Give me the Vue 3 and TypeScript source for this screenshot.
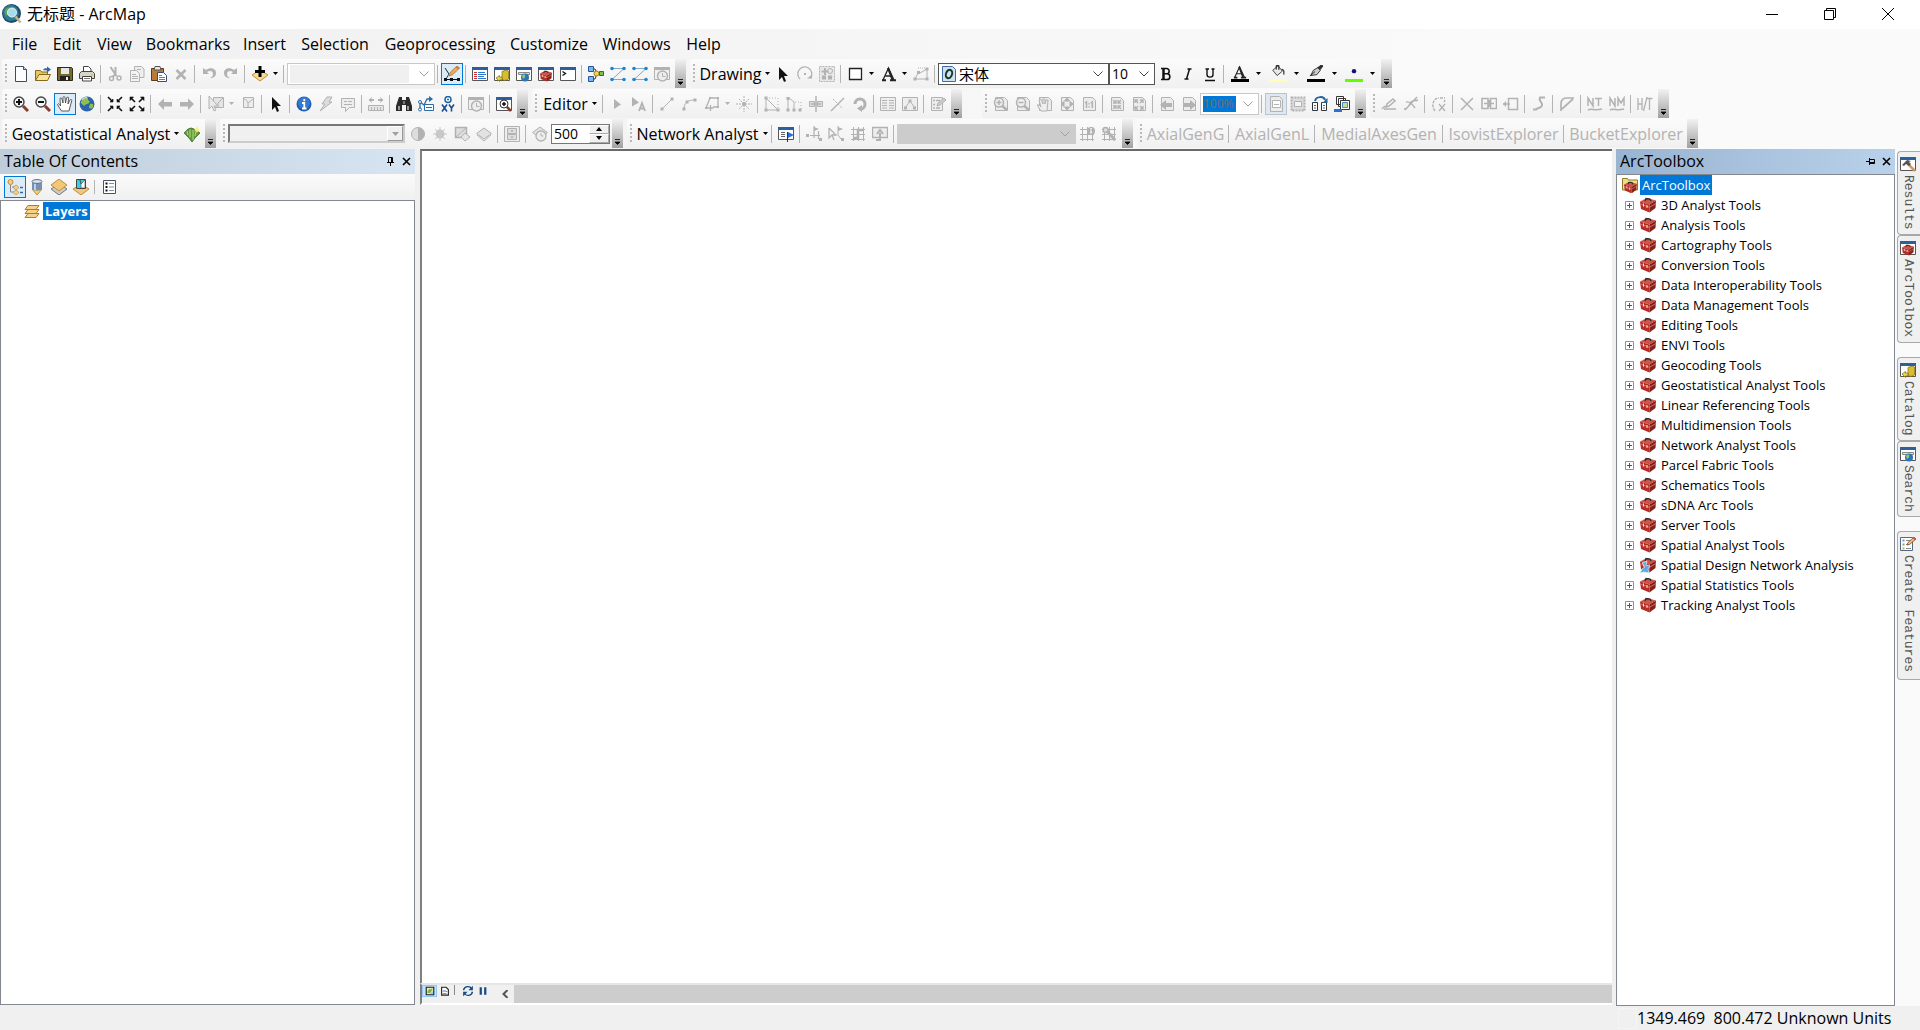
<script setup lang="ts">
import { ref } from 'vue'

interface Item {
  kind: 'btn' | 'split' | 'colour' | 'sep' | 'menu' | 'text' | 'combo' | 'spin'
  icon?: string
  label?: string
  off?: boolean
  on?: boolean
  width?: number
  look?: string
  swatch?: string
}
interface Toolbar {
  name: string
  items: Item[]
  apart?: boolean
}

const b = (icon: string, label: string): Item => ({ kind: 'btn', icon, label })
const d = (icon: string, label: string): Item => ({ kind: 'btn', icon, label, off: true })
const on = (icon: string, label: string): Item => ({ kind: 'btn', icon, label, on: true })
const split = (icon: string, label: string, off = false): Item => ({ kind: 'split', icon, label, off })
const colour = (icon: string, label: string, swatch: string): Item => ({ kind: 'colour', icon, label, swatch })
const menu = (label: string, width: number): Item => ({ kind: 'menu', label, width })
const text = (label: string, width: number): Item => ({ kind: 'text', label, width, off: true })
const sep: Item = { kind: 'sep' }

const win = '<path d="M.5 2.500h15v12H.5z" fill="#fff" stroke="#555"/><path d="M0 1h16v3H0z" fill="#2b5f9e"/>'
const page = '<path d="M2.500 1.500h9l3 3v10h-12z" fill="#ececec" stroke="currentColor"/>'
const box =
  '<path d="M0 4.500L7 1l9 2.500-6.500 4z" fill="#cf5247"/><path d="M0 4.500l9.500 3V15.500L1 12z" fill="#b62d25"/><path d="M9.500 7.500L16 3.500l-.5 7.500-6 4.500z" fill="#86201a"/><path d="M0 7l9.500 3.300L16 6.500" fill="none" stroke="#e08378" stroke-width=".8"/><path d="M5 4l1-2.500 4 .5 1 2" fill="none" stroke="#2b2b2b" stroke-width="1.300"/><path d="M3.500 6.500v3M7 8v3" stroke="#f4e5e2"/>'
const globe =
  '<circle cx="8" cy="8" r="7.500" fill="#2d62ad"/><path d="M3 4c3-4 7-3 6 0 3 1 1 4-1 4s-2 3-4 1S1 7 3 4zM11 8c3-1 4 1 3 3s-4 2-4 0z" fill="#8cc152"/><path d="M3 4c1-2 4-3 5-2" stroke="#fff" stroke-width="1.500" opacity=".6" fill="none"/>'
const lens = (s: string, c: string) =>
  `<path d="M10 10l5 5" stroke="#8a3b2c" stroke-width="3"/><circle cx="6" cy="6" r="5" fill="#f4f4f4" stroke="${c}" stroke-width="1.400"/><path d="${s}" stroke="#111" stroke-width="2"/>`
const zigzag =
  '<path d="M2 2.500h12L2 13.500h12" fill="none" stroke="#7ea9cf"/><g fill="#1c87c9"><circle cx="2" cy="2.500" r="1.800"/><circle cx="14" cy="2.500" r="1.800"/><circle cx="2" cy="13.500" r="1.800"/><circle cx="14" cy="13.500" r="1.800"/></g>'
const clockWin =
  '<path d="M.5 1.500h15v12H.5z" fill="#f1f1f1" stroke="currentColor"/><path d="M0 1h16v3H0z" fill="currentColor"/><circle cx="8.500" cy="10" r="5" fill="#eee" stroke="currentColor" stroke-width="1.500"/><path d="M8.500 7v3.500h3" fill="none" stroke="currentColor"/>'
const grid = '<path d="M1 3.500h14M1 8.500h14M1 13.500h14M3.500 1v14M8.500 1v14M13.500 1v14" fill="none" stroke="currentColor"/>'

const icons: Record<string, string> = {
  new: '<path d="M2.500.5h8l3 3v12h-11z" fill="#fbfdff" stroke="#3f4a5c"/><path d="M10.500.5v3h3" fill="#cfd8e4" stroke="#3f4a5c"/>',
  open: '<path d="M.5 14.500v-10h5l1 1.500h6v3" fill="#e7c667" stroke="#846a1e"/><path d="M.5 14.500L4 8.500h11.500l-3 6z" fill="#fbe49a" stroke="#846a1e"/><path d="M8 4c1-2 3-2 4-1.500V.5l4 3-4 3V4.500c-2-.5-3 0-4-.5z" fill="#2f66a5"/>',
  save: '<path d="M.5 1.500h14l1 1v12H.5z" fill="#766b2c" stroke="#2d2a17"/><path d="M4 2h8v6H4z" fill="#e6e6e6"/><path d="M3 10h10v4.500H3z" fill="#222"/><path d="M9 11h2v3H9z" fill="#eee"/>',
  print: '<path d="M4.500 6V.5h5l2.500 2.500v3" fill="#fff" stroke="#444"/><path d="M.5 7.500l2-2h11l2 2v5H.5z" fill="#d7d4cc" stroke="#444"/><path d="M3.500 10.500h9v4.500h-9z" fill="#fff" stroke="#444"/><path d="M5 12.500h6" stroke="#777"/><path d="M12 8h2v1.500h-2z" fill="#d9c44a"/>',
  cut: '<path d="M3.500 1l6 9M8.500 1v7l-3 3" fill="none" stroke="currentColor" stroke-width="2"/><circle cx="4.500" cy="12.500" r="2" fill="none" stroke="currentColor" stroke-width="1.500"/><circle cx="12" cy="12" r="2" fill="none" stroke="currentColor" stroke-width="1.500"/>',
  copy: '<path d="M5.500.5h7l2.500 2.500v8.500H5.500z" fill="#eee" stroke="currentColor"/><path d="M1.500 4.500h6l3 3v8h-9z" fill="#f3f3f3" stroke="currentColor"/><path d="M3 8.500h4M3 10.500h6M3 12.500h6M8 3.500h4" stroke="currentColor"/>',
  paste: '<path d="M.5 2.500h12v12H.5z" fill="#b97b3c" stroke="#5a3b1a"/><path d="M4 .5h5l1 3.500H3z" fill="#e8e8e8" stroke="#555"/><path d="M6.500 6.500h6l3 3v6h-9z" fill="#fff" stroke="#33507c"/><path d="M8 9.500h3M8 11.500h6M8 13.500h6" stroke="#5a80b8"/>',
  del: '<path d="M3.500 4l9 9M12.500 4l-9 9" stroke="currentColor" stroke-width="2.500"/>',
  undo: '<path d="M2 2v6h6L6 6c3-2 6-1 6 2 0 2-1 3-3 4 4 0 6-2 6-5 0-5-6-6-10-3z" fill="currentColor"/>',
  redo: '<path d="M14 2v6H8l2-2C7 4 4 5 4 8c0 2 1 3 3 4-4 0-6-2-6-5 0-5 6-6 10-3z" fill="currentColor"/>',
  add: '<path d="M0 9l8-5 8 5-8 6z" fill="#f8d990" stroke="#c78a33"/><path d="M8 0v11M3 5.500h10" stroke="#000" stroke-width="3"/>',
  sketch: '<path d="M2 13l3-5M9 13.500h6" fill="none" stroke="#444"/><path d="M0 12h3v3H0zM6 12h3v3H6zM13 12h3v3h-3z" fill="#111"/><path d="M2 13.500h12" stroke="#111"/><path d="M1 2l4 6" stroke="#222"/><path d="M5 10l1.500-4L13 0l2.500 2L9 8.500z" fill="#e9ad55" stroke="#9c6a38" stroke-width=".7"/><path d="M13 0l2.500 2-1.500 1.300L11.700 1.200z" fill="#d46e62"/>',
  winToc: win + '<path d="M2 6.500h3M2 8.500h3M2 10.500h3M2 12.500h3" stroke="#d12f2f"/><path d="M6 6.500h7M6 8.500h8M6 10.500h6M6 12.500h8" stroke="#2f7ad1"/>',
  winCat: win + '<path d="M8 5.500l4-1.500 2.500 1v8L11 14.500l-3-1z" fill="#d9bd2b" stroke="#7d6a10" stroke-width=".7"/><path d="M2 12l3.500-2.500V11H8v3H5.500v1.500z" fill="#e8d34d" stroke="#7d6a10" stroke-width=".7"/>',
  winSearch: win + '<path d="M2.500 6.500h11v2h-11z" fill="#dfe6ef" stroke="#888"/><circle cx="9" cy="11.500" r="4" fill="#2f74b8"/><path d="M6 10c2-3 4-1 3 1s-2 3-3-1z" fill="#93cc5c"/>',
  winBox: win + `<g transform="translate(2 4) scale(.74)">${box}</g>`,
  winPy: win + '<path d="M2.500 5.500l3 2-3 2" fill="none" stroke="#111" stroke-width="1.300"/>',
  model: '<path d="M4 3h3l2 4h4M4 13h3l2-5" fill="none" stroke="#333"/><path d="M.5.5h5v5h-5zM.5 10.500h5v5h-5z" fill="#7fb6ec" stroke="#1f57a0"/><circle cx="8.500" cy="7.500" r="2.500" fill="#f5d34d" stroke="#a07e10"/><path d="M11.500 5.500h4v4h-4z" fill="#79c25a" stroke="#2d6f1a"/>',
  zigzag,
  clockWin,
  zoomIn: lens('M6 3v6M3 6h6', '#444'),
  zoomOut: lens('M3 6h6', '#444'),
  hand: '<path d="M4.500 15c-1-2-3-4-4-6.500 1-1.500 2-.5 3 1.500L3 3c0-1.500 1.500-1.500 2 0l1 4V1.500c.3-1.300 1.700-1.300 2 0L8.500 7l1-5c.5-1.300 2-1 2 0L11 8l2-4c.7-1 2-.5 1.800.5L13 11l-1 4z" fill="#fff" stroke="#4a4a4a" stroke-width=".9"/>',
  globe,
  fixedIn: '<g fill="#111" stroke="#111" stroke-width="1.600"><path d="M1 1l4 4M15 1l-4 4M1 15l4-4M15 15l-4-4"/><path d="M6 3v3H3zM10 3v3h3zM6 13v-3H3zM10 13v-3h3z" stroke-width=".6"/></g>',
  fixedOut: '<g fill="#111" stroke="#111" stroke-width="1.600"><path d="M2 2l4 4M14 2l-4 4M2 14l4-4M14 14l-4-4"/><path d="M1 4.500V1h3.500zM15 4.500V1h-3.500zM1 11.500V15h3.500zM15 11.500V15h-3.500z" stroke-width=".6"/></g>',
  back: '<path d="M1 8l6-5.500V6h8v4.500H7v3.500z" fill="currentColor"/>',
  fwd: '<path d="M15 8L9 2.500V6H1v4.500h8v3.500z" fill="currentColor"/>',
  select: '<path d="M5.500 1.500h10v10h-10z" fill="#e4e4e4" stroke="currentColor"/><path d="M15 2l-5 5v4" fill="none" stroke="currentColor"/><path d="M1 0v13l3-3 2 5 2-1-2-4h4z" fill="#e9e9e9" stroke="currentColor"/>',
  clear: '<path d="M3.500 1.500h10v10h-10z" fill="#ededed" stroke="currentColor"/><path d="M4 3c4 1 3 3 4 4l5-4M8 7v4" fill="none" stroke="currentColor"/>',
  arrow: '<path d="M4 1v13l3-3 2 5 2-1-2-5h4z" fill="#111"/>',
  info: '<circle cx="8" cy="8" r="7.500" fill="#1f5fb4"/><circle cx="8" cy="7" r="6" fill="#3779cc"/><path d="M8.300 3v2.200M6 7h2.300v5.500M6 12.500h4.500" stroke="#fff" stroke-width="1.800" fill="none"/>',
  bolt: '<path d="M9 1h5l-3 5h3L2 15l5-7H4z" fill="#ddd" stroke="currentColor"/>',
  note: '<path d="M1.500 2.500h13v9h-5l-4 4v-4h-4z" fill="#eee" stroke="currentColor"/><path d="M4 5.500h3M8 5.500h4M4 8.500h8" stroke="currentColor"/>',
  measure: '<path d="M.5 9.500h15v5H.5z" fill="#e6e6e6" stroke="currentColor"/><path d="M3.500 11v3M6.500 11v3M9.500 11v3M12.500 11v3" stroke="currentColor"/><path d="M1 4h5M10 4h5" stroke="currentColor" stroke-width="2"/><path d="M4 1.500L1 4l3 2.500M12 1.500L15 4l-3 2.500" fill="none" stroke="currentColor"/>',
  binoc: '<path d="M3 1h3v3h4V1h3l3 9v5h-6V9H6v6H0v-5z" fill="#2b2b2b"/><path d="M2 10h2v4H2zM11 10h2v4h-2z" fill="#999"/><path d="M7 5h2v3H7z" fill="#777"/>',
  route: '<path d="M2 13V6l4 3 3-6h3" fill="none" stroke="#2c6ca6" stroke-width="1.300"/><path d="M11 0l4 3-4 3z" fill="#2c6ca6"/><g fill="#fff" stroke="#2c6ca6"><circle cx="2" cy="13.500" r="1.500"/><circle cx="2" cy="6" r="1.500"/><path d="M6.500 8.500h9v6h-9z"/></g><path d="M8 11.500h6" stroke="#2c6ca6"/>',
  goxy: '<circle cx="8" cy="3.500" r="3" fill="#fff" stroke="#1d62a5" stroke-width="1.500"/><circle cx="8" cy="3.500" r="1" fill="#1d62a5"/><path d="M2 8.500l5 7M7 8.500l-5 7M9 8.500l2.500 3.500v3.500M14 8.500L11.500 12" fill="none" stroke="#1d4f93" stroke-width="1.600"/>',
  viewer: win + '<path d="M10 10l5 5" stroke="#8a3b2c" stroke-width="2.500"/><circle cx="8" cy="8" r="4" fill="#fff" stroke="#333"/><path d="M8 6v4M6 8h4" stroke="#111" stroke-width="1.500"/>',
  play: '<path d="M5 3l7 5.500-7 4.500z" fill="currentColor"/>',
  playA: '<path d="M1 1l7 5.500-7 4z" fill="currentColor"/><path d="M8 15l3-8 3 8M9 12.500h4" fill="none" stroke="currentColor" stroke-width="1.800"/>',
  line: '<path d="M3 13L13 3" stroke="currentColor"/><path d="M1.500 11.500h3v3h-3zM11.500 1.500h3v3h-3z" fill="currentColor"/>',
  arc: '<path d="M3 13c0-6 4-9 10-9" fill="none" stroke="currentColor"/><path d="M1.500 11.500h3v3h-3zM4.500 4.500h3v3h-3zM12.500 2.500h3v3h-3z" fill="currentColor"/>',
  trace: '<path d="M2 12L6 2h8v9H9M2 12h2" fill="none" stroke="currentColor" stroke-width="1.300"/><path d="M6.500 9v6M3.500 12h6" stroke="currentColor" stroke-width="1.300"/><path d="M5 1h2v2H5zM13 1h2v2h-2zM13 10h2v2h-2zM1 11h2v2H1z" fill="currentColor"/>',
  burst: '<path d="M8 0v16M0 8h16M3 3l10 10M13 3L3 13" stroke="currentColor" stroke-dasharray="2 1"/><circle cx="8" cy="8" r="2" fill="currentColor"/>',
  reshape: '<path d="M2 2v12h12z" fill="none" stroke="currentColor"/><path d="M2 2h12v12" fill="none" stroke="currentColor" stroke-dasharray="1 2"/><path d="M.5.5h3v3h-3zM.5 12.500h3v3h-3zM12.500 12.500h3v3h-3z" fill="currentColor"/>',
  sides: '<path d="M2 2v12M3 2l5 4v8" fill="none" stroke="currentColor"/><path d="M9 6h6v8" fill="none" stroke="currentColor" stroke-dasharray="1 2"/><path d="M.5 1h3v3h-3zM.5 12.500h3v3h-3zM6.500 12.500h3v3h-3zM12.500 12.500h3v3h-3z" fill="currentColor"/>',
  slice: '<path d="M1.500 5.500h5v5h-5zM9.500 5.500h5v5h-5z" fill="#ddd" stroke="currentColor"/><path d="M8 0v16M3 8h10" stroke="currentColor" stroke-width="1.500"/>',
  cross: '<path d="M1 15L14 2" stroke="currentColor" stroke-width="1.500"/><path d="M3 3l9 9" stroke="currentColor" stroke-dasharray="2 1.500"/>',
  rotate: '<path d="M3 8a5 5 0 1 1 6 5" fill="none" stroke="currentColor" stroke-width="3"/><path d="M10 9v7l-5-3.500z" fill="currentColor"/>',
  table: '<path d="M.5 1.500h15v13H.5z" fill="#eee" stroke="currentColor"/><path d="M2 4.500h5M9 4.500h5M2 7h5M9 7h5M2 9.500h5M9 9.500h5M2 12h5M9 12h5" stroke="currentColor"/>',
  verts: '<path d="M.5 1.500h15v13H.5z" fill="#eee" stroke="currentColor"/><path d="M3 12l5-7 5 7" fill="none" stroke="currentColor"/><path d="M2 10.500h3v3H2zM6.500 3.500h3v3h-3zM11 10.500h3v3h-3z" fill="currentColor"/>',
  create: '<path d="M1.500 1.500h11v13h-11z" fill="#eee" stroke="currentColor"/><path d="M3 4.500h2M3 8.500h2M3 12h2M6 4.500h4M6 12h4" stroke="currentColor" stroke-width="1.500"/><path d="M7 10l1-3 6-5 2 2-6 5z" fill="#ccc" stroke="currentColor"/>',
  turn: '<path d="M3 13A7 7 0 1 1 13.500 12" fill="none" stroke="currentColor" stroke-width="1.300"/><path d="M10 12.500h5v-4z" fill="currentColor"/><path d="M7 7h2v2H7z" fill="currentColor"/>',
  group: '<path d="M.5.5h15v15H.5z" fill="#e8e8e8" stroke="currentColor" stroke-dasharray="2 1"/><path d="M6 2v7M2.500 5.500h7" stroke="currentColor" stroke-width="2"/><circle cx="11" cy="5" r="2.500" fill="none" stroke="currentColor"/><path d="M3 9.500h4v4H3zM9 9.500h4v4H9z" fill="currentColor"/>',
  rect: '<path d="M1.500 2.500h12v11h-12z" fill="#fff" stroke="#222" stroke-width="1.300"/>',
  letterA: '<path d="M2 14L7.500 2 13 14M4.500 10h6" fill="none" stroke="#222" stroke-width="1.300"/><path d="M7 2l4.500 12M1 14.300h4M9 14.300h6" stroke="#222" stroke-width="2"/>',
  poly: '<path d="M2 13L5 7h2l7-4v10z" fill="none" stroke="currentColor"/><path d="M.5 11.500h3v3h-3zM12.500 11.500h3v3h-3zM12.500 1.500h3v3h-3zM4 5h3v3H4z" fill="currentColor"/><path d="M5 2h7" stroke="currentColor" stroke-dasharray="1 1"/>',
  bold: '<path d="M3 2.500h5.500a2.500 2.500 0 0 1 0 5.300H5.500M5.500 7.800h3.500a2.800 2.800 0 0 1 0 5.700H3" fill="none" stroke="#111" stroke-width="1.600"/><path d="M5.500 2.500v11" stroke="#111" stroke-width="2.500"/>',
  italic: '<path d="M9.500 3l-3 10M7.500 3h4M4.500 13h4" stroke="#111" stroke-width="1.500"/>',
  under: '<path d="M5 3v5.500c0 3.500 6 3.500 6 0V3M3.500 3h3.500M9.500 3h3M3 14.500h10" fill="none" stroke="#111" stroke-width="1.400"/>',
  fill: '<path d="M2 6l6-5 5 6-6 5z" fill="#e8e8e8" stroke="#333"/><path d="M6 5V1.500c0-1.500 3-1.500 3 0v4M12 5c3 0 3 3 2.500 6" fill="none" stroke="#333" stroke-width="1.400"/>',
  pen: '<path d="M2 12l3-6 5-3 3 3-4 5z" fill="#ccc" stroke="#222"/><path d="M1 12.500l6-5M10 3l4-3 2 1-3 4z" fill="#333" stroke="#222"/>',
  dot: '<circle cx="8" cy="7" r="2.500" fill="#10107c"/>',
  pZoomIn: page + '<path d="M8 9l6 5" stroke="currentColor" stroke-width="2.500"/><circle cx="6" cy="6.500" r="4.500" fill="#eee" stroke="currentColor" stroke-width="1.500"/><path d="M6 4v5M3.500 6.500h5" stroke="currentColor" stroke-width="1.500"/>',
  pZoomOut: page + '<path d="M8 9l6 5" stroke="currentColor" stroke-width="2.500"/><circle cx="6" cy="6.500" r="4.500" fill="#eee" stroke="currentColor" stroke-width="1.500"/><path d="M3.500 6.500h5" stroke="currentColor" stroke-width="1.500"/>',
  pHand: page + '<path d="M4 15L0 9h2l2 2-2-7 2-1 2 5V3h2v5l1-4h2l-1 11z" fill="#eee" stroke="currentColor"/>',
  pFull: page + '<path d="M8 2l2.500 3h-5zM8 14l2.500-3h-5zM2 8l3-2.500v5zM14 8l-3-2.500v5z" fill="currentColor" stroke="currentColor"/>',
  pOne: page + '<path d="M4 7l1.500-1v6M9.800 7l1.500-1v6" fill="none" stroke="currentColor" stroke-width="1.500"/><path d="M8 7v1.500M8 10v1.500" stroke="currentColor" stroke-width="1.300"/>',
  pIn: page + '<path d="M4 4l3 3M12 4L9 7M4 13l3-3M12 13l-3-3M4 7h3V4M9 4v3h3M4 10h3v3M12 10H9v3" fill="none" stroke="currentColor" stroke-width="1.300"/>',
  pOut: page + '<path d="M4 4l3 3M12 4L9 7M4 13l3-3M12 13l-3-3M4 7V4h3M9 4h3v3M4 10v3h3M12 10v3H9" fill="none" stroke="currentColor" stroke-width="1.300"/>',
  pBack: page + '<path d="M1 9l6-5v3h6v4H7v3z" fill="currentColor"/>',
  pFwd: page + '<path d="M15 9L9 4v3H2v4h7v3z" fill="currentColor"/>',
  draft: '<path d="M2.500.5h9l3 3v12h-12z" fill="#ececec" stroke="currentColor"/><path d="M4.500 4.500h8v7h-8z" fill="#fff" stroke="currentColor"/><path d="M6 8.500h5" stroke="currentColor"/>',
  focus: '<path d="M1.500 1.500h13v13h-13z" fill="#ddd" stroke="currentColor" stroke-width="2" stroke-dasharray="2 1"/><path d="M4.500 5.500h7v5h-7z" fill="#f4f4f4" stroke="currentColor"/>',
  swap: '<path d="M.5 6.500h5v8h-5zM9.500 6.500h5v8h-5z" fill="#fff" stroke="#333"/><path d="M2 9.500h2M2 12h2M11 9.500h2M11 12h2" stroke="#2f6ca6"/><path d="M3 5c1-5 9-5 10-1" fill="none" stroke="#1f659e" stroke-width="2"/><path d="M15.500 2v5h-5z" fill="#1f659e"/>',
  pages: '<path d="M2.500.5h7v8h-7zM4.500 2.500h7v8h-7z" fill="#fff" stroke="#333"/><path d="M6.500 4.500h9v9h-9z" fill="#fff" stroke="#333"/><path d="M8.500 6.500h5v5h-5z" fill="#c6dd9a" stroke="#4a8bb8"/><path d="M0 13h8v3H0z" fill="#2f6fd0"/>',
  edge: '<path d="M3 13h12M5 11l1-3 6-5 2 2-6 5zM1 13l3-3" fill="none" stroke="currentColor" stroke-width="1.500"/>',
  cut2: '<path d="M1 13c5 0 5-5 7-7s5-1 7-2M3 6c4-1 7 3 9 6M14 1L2 14" fill="none" stroke="currentColor" stroke-width="1.400"/>',
  curveX: '<path d="M4 15C0 10 2 2 8 2M9 2h5M14 4l-1 2" fill="none" stroke="currentColor" stroke-width="1.400" stroke-dasharray="3 1"/><path d="M8 8l6 7M14 8l-6 7" stroke="currentColor" stroke-width="1.300"/>',
  bigX: '<path d="M2 2l12 12M14 2L2 14" stroke="currentColor" stroke-width="1.500"/>',
  pair: '<path d="M1 2.500h6v10H1zM9.500 2.500h6v10h-6zM3 7.500h10M8 4v7" fill="none" stroke="currentColor" stroke-width="1.600"/>',
  ext: '<path d="M5.500 2.500h9v11h-9zM0 8h7" fill="none" stroke="currentColor" stroke-width="1.500"/><path d="M3 5L0 8l3 3z" fill="currentColor"/>',
  scurve: '<path d="M14 1.500H9c-2 3 3 5 2 8s-4 2-6 4M2 13.500h4" fill="none" stroke="currentColor" stroke-width="2"/>',
  fillet: '<path d="M2 15V8c0-5 3-6 6-6h7M3 13L14 3" fill="none" stroke="currentColor" stroke-width="1.700"/>',
  nt: '<path d="M1 10V2l5 8V2M8 2.500h7M11.500 2v8" fill="none" stroke="currentColor" stroke-width="1.500"/><path d="M1 14c4-2 6 1 14-1" fill="none" stroke="currentColor" stroke-width="1.500"/>',
  nm: '<path d="M1 10V2l5 8V2M9 10V2l3 5 3-5v8" fill="none" stroke="currentColor" stroke-width="1.500"/><path d="M1 14c4-2 6 1 14-1" fill="none" stroke="currentColor" stroke-width="1.500"/>',
  ht: '<path d="M1 2v12M5 2v12M1 8h4M10 1L6.500 15M9.500 2.500h6M12.500 2v12" fill="none" stroke="currentColor" stroke-width="1.300"/>',
  wizard: '<path d="M0 7l4-4 3-1 3 1 6 4-5 5-3 4-3-4z" fill="#5f9a3a" stroke="#2f5e1a" stroke-width=".7"/><path d="M3 5l1 4M6 3.500v8M9 4v10M12 5l-1 5" stroke="#b9dd84"/><path d="M13 0l1 2.500L16 4l-2 1-1 2-1-2-2-1 2-1.500z" fill="#fdf06a"/>',
  contrast: '<circle cx="8" cy="8" r="6.500" fill="#ddd" stroke="currentColor"/><path d="M8 1.500a6.500 6.500 0 0 1 0 13z" fill="currentColor"/>',
  sun: '<circle cx="8" cy="8" r="4.500" fill="#c8c8c8"/><path d="M8 1v14M1 8h14M3 3l10 10M13 3L3 13" stroke="#c8c8c8"/>',
  layerPic: '<path d="M1.500 1.500h11v10h-11z" fill="#ddd" stroke="currentColor" stroke-width="1.500"/><path d="M2 11L12 2M7 11l4-4 5 4-5 4z" fill="#e6e6e6" stroke="currentColor"/>',
  diamond: '<path d="M.5 7.500L8 2l7.500 5.500L8 13z" fill="#e2e2e2" stroke="currentColor"/><path d="M1 9l7 6 7-6" fill="none" stroke="currentColor"/>',
  cabinet: '<path d="M.5.5h15v15H.5z" fill="#eee" stroke="currentColor"/><path d="M3.500 2.500h9v5h-9zM3.500 8.500h9v5h-9z" fill="#ddd" stroke="currentColor"/><path d="M7 5h2M7 11h2" stroke="currentColor" stroke-width="1.500"/>',
  layerClock: '<path d="M.5 6.500L8 1l7.500 5.500L8 12z" fill="#e2e2e2" stroke="currentColor"/><circle cx="9" cy="10" r="5" fill="#eee" stroke="currentColor" stroke-width="1.300"/><path d="M9 7v3h2.500" fill="none" stroke="currentColor"/>',
  naWin: '<path d="M.5 1.500h15v12H.5z" fill="#fff" stroke="#555"/><path d="M0 1h16v3H0z" fill="#2b5f9e"/><path d="M3 6.500h4M3 8.500h4M3 10.500h4" stroke="#666"/><path d="M9.500 6v10" stroke="#333"/><path d="M10 6l6 3-6 3z" fill="#2d6fe0"/>',
  naAdd: '<path d="M0 8h3v3H0zM8 1l5 2-5 2zM13 12h3v3h-3z" fill="currentColor"/><path d="M8 0v12M4 9.500h10M12.500 5v8" stroke="currentColor" stroke-width="1.200"/>',
  naSel: '<path d="M1 2v10l3-3 2 5M1 2l7 7H4" fill="none" stroke="currentColor" stroke-width="1.300"/><path d="M10 0v9l3 4" fill="none" stroke="currentColor"/><path d="M10 1l5 2-5 2zM13 12h3v3h-3z" fill="currentColor"/>',
  naGrid: grid + '<path d="M3 12h5V4h6" fill="none" stroke="currentColor" stroke-width="2.500"/>',
  naTurn: '<path d="M.5 1.500h15v10H.5z" fill="#eee" stroke="currentColor" stroke-width="1.500"/><path d="M4 14h4V7M5 8l3-4 3 4" fill="none" stroke="currentColor" stroke-width="2"/>',
  gridInfo: grid + '<circle cx="12" cy="5" r="4" fill="currentColor"/><path d="M12 2v1.500M12 4.500v3" stroke="#fff" stroke-width="1.500"/>',
  gridTool: grid + '<path d="M5 4l9 10" stroke="currentColor" stroke-width="3"/><circle cx="4.500" cy="4" r="2.500" fill="#ddd" stroke="currentColor" stroke-width="1.500"/>',
  tocDraw: '<circle cx="3.500" cy="3" r="2.500" fill="#f4cf87" stroke="#c28d3a"/><path d="M3.500 6v7h4M5 8h3" fill="none" stroke="#888"/><path d="M6 8.500l3-2.500 3 2.500-3 2.500zM6 13.500l3-2.500 3 2.500-3 2.500z" fill="#f4cf87" stroke="#c28d3a" stroke-width=".7"/><path d="M13 8.500h3M13 13.500h3" stroke="#2b6cb0" stroke-width="1.500"/>',
  tocSource: '<path d="M3 10l5 6 5-6z" fill="#f4cf72" stroke="#c28d3a"/><path d="M3 3v7c0 2 10 2 10 0V3z" fill="#7791b3"/><path d="M5 3v8h2V3z" fill="#c3d0e2"/><ellipse cx="8" cy="2.500" rx="5" ry="2" fill="#d9e2ee" stroke="#60718a"/>',
  tocVis: '<path d="M0 10l8 6 8-6-8-5z" fill="#ccc" stroke="#777"/><path d="M0 6l8 6 8-6-8-6z" fill="#f4c677" stroke="#c28d3a"/>',
  tocSel: '<path d="M0 10l8 6 8-6-8-5z" fill="#f4c677" stroke="#c28d3a"/><path d="M3.500.5h9v9h-9z" fill="#35cfe6" stroke="#444"/><path d="M7 1l1 4 4-4v8H8V5z" fill="#fff" stroke="#444" stroke-width=".6"/>',
  tocOpt: '<path d="M2.500 1.500h12v13h-12z" fill="#fff" stroke="#44546a"/><path d="M4.500 4.500h2M4.500 8h2M4.500 11.500h2" stroke="#111" stroke-width="2"/><path d="M8 4.500h5M8 8h5M8 11.500h5" stroke="#7b8ca5"/>',
  layers: '<path d="M1 14.500l3-4h11l-3 4zM1 10.500l3-4h11l-3 4zM1 6.500l3-4h11l-3 4z" fill="#f5d28a" stroke="#b07c2a"/>',
  box,
  boxBlue: box + '<path d="M2 6l5-2-1 4 4 1-2 3 1 4-5-1-4 1 2-4 3-2z" fill="#5fa8e6" stroke="#e6f2fb" stroke-width=".7"/>',
  boxRoot: `<path d="M.5 13V1.500h5l1 1.500h9V13z" fill="#eedd86" stroke="#8f7a28"/><g transform="translate(2 4) scale(.8)">${box}</g>`,
  hammer: win + '<path d="M8 8l7 7" stroke="#d49a5c" stroke-width="2.500"/><path d="M2 9l5-5 4 1-2 1 2 2-2 2-3-2-2 2z" fill="#555"/>',
  tabCreate: '<path d="M.5 1.500h12v13H.5z" fill="#fff" stroke="#4d6a88"/><path d="M2.500 3.500h2v2h-2z" fill="#5a9bd5"/><path d="M2.500 7.500h2v2h-2z" fill="#6fb551"/><path d="M2.500 11.500h2v2h-2z" fill="#e9a23b"/><path d="M6 4.500h5M6 8.500h3M6 12.500h5" stroke="#888"/><path d="M7 9l1-2.500L14 1l2 2-6.500 5.500z" fill="#efc07c" stroke="#7a4a2a" stroke-width=".8"/><path d="M14 1l2 2-1.500 1.200-2-2z" fill="#d55"/>',
  truetype: '<path d="M1.500.5h10l3 3v12h-13z" fill="#cfe1f7" stroke="#3f6ca8"/><ellipse cx="8" cy="8" rx="3" ry="4.300" fill="none" stroke="#173a20" stroke-width="2" transform="rotate(20 8 8)"/>',
  mapView: '<path d="M3 3h10v10H3z" fill="#e4efb4" stroke="#222" stroke-width="1.500"/><path d="M4 10l3-5 2 1 2-2v2l-3 5z" fill="#84ad45"/><path d="M8 12l2-4 2 1v3z" fill="#9fd0ea"/>',
  layoutView: '<path d="M3.500 3h6l3 3v7.500h-9z" fill="#fff" stroke="#222" stroke-width="1.500"/><path d="M5 7h4v2H5z" fill="#7aa5d8"/><path d="M5 11.500h5M9 8.500h2" stroke="#555"/>',
  refresh: '<path d="M2 7a6 6 0 0 1 11-2M14 9a6 6 0 0 1-11 2" fill="none" stroke="#184a86" stroke-width="1.800"/><path d="M14.500 1v6h-6zM1.500 15V9h6z" fill="#184a86"/>',
  pause: '<path d="M5 3v10M11 3v10" stroke="#184a86" stroke-width="3"/>',
}

const rows: Toolbar[][] = [
  [
    {
      name: 'Standard',
      items: [
        b('new', 'New'), b('open', 'Open'), b('save', 'Save'), b('print', 'Print'), sep,
        d('cut', 'Cut'), d('copy', 'Copy'), b('paste', 'Paste'), d('del', 'Delete'), sep,
        d('undo', 'Undo'), d('redo', 'Redo'), sep, split('add', 'Add Data'), sep,
        { kind: 'combo', look: 'flat inset', width: 148, label: 'Map Scale', off: true }, sep,
        on('sketch', 'Editor Toolbar'), sep,
        b('winToc', 'Table Of Contents'), b('winCat', 'Catalog'), b('winSearch', 'Search'), b('winBox', 'ArcToolbox'), b('winPy', 'Python'), sep,
        b('model', 'ModelBuilder'), b('zigzag', 'Simplify'), b('zigzag', 'Smooth'), d('clockWin', 'Time Slider'),
      ],
    },
    {
      name: 'Draw',
      items: [
        menu('Drawing', 74), b('arrow', 'Select Elements'), d('turn', 'Rotate'), d('group', 'Zoom to Elements'), sep,
        split('rect', 'Rectangle'), split('letterA', 'Text'), d('poly', 'Edit Vertices'), sep,
        { kind: 'combo', look: 'dark glyph', width: 171, label: '宋体' },
        { kind: 'combo', look: 'dark number', width: 46, label: '10' },
        b('bold', 'Bold'), b('italic', 'Italic'), b('under', 'Underline'), sep,
        colour('letterA', 'Font Color', '#000'), colour('fill', 'Fill Color', '#ffffb4'),
        colour('pen', 'Line Color', '#000'), colour('dot', 'Marker Color', '#5fff00'),
      ],
    },
  ],
  [
    {
      name: 'Tools',
      items: [
        b('zoomIn', 'Zoom In'), b('zoomOut', 'Zoom Out'), on('hand', 'Pan'), b('globe', 'Full Extent'), sep,
        b('fixedIn', 'Fixed Zoom In'), b('fixedOut', 'Fixed Zoom Out'), sep, d('back', 'Back'), d('fwd', 'Forward'), sep,
        split('select', 'Select Features', true), d('clear', 'Clear Selection'), sep, b('arrow', 'Select'), sep,
        b('info', 'Identify'), d('bolt', 'Hyperlink'), d('note', 'HTML Popup'), sep, d('measure', 'Measure'), sep,
        b('binoc', 'Find'), b('route', 'Find Route'), b('goxy', 'Go To XY'), sep, d('clockWin', 'Time'), sep, b('viewer', 'Viewer Window'),
      ],
    },
    {
      name: 'Editor',
      items: [
        menu('Editor', 60), sep, d('play', 'Edit'), d('playA', 'Edit Annotation'), sep,
        d('line', 'Straight Segment'), d('arc', 'Arc Segment'), split('trace', 'Trace', true), d('burst', 'Point'), sep,
        d('reshape', 'Edit Vertices'), d('sides', 'Reshape'), d('slice', 'Cut Polygons'), d('cross', 'Split'), d('rotate', 'Rotate'), sep,
        d('table', 'Attributes'), d('verts', 'Sketch Properties'), sep, d('create', 'Create Features'),
      ],
    },
    {
      name: 'Layout',
      apart: true,
      items: [
        d('pZoomIn', 'Zoom In'), d('pZoomOut', 'Zoom Out'), d('pHand', 'Pan'), d('pFull', 'Whole Page'), d('pOne', '1:1'), sep,
        d('pIn', 'Fixed Zoom In'), d('pOut', 'Fixed Zoom Out'), sep, d('pBack', 'Back'), d('pFwd', 'Forward'),
        { kind: 'combo', look: 'flat picked', width: 59, label: '100%' }, sep,
        { kind: 'btn', icon: 'draft', label: 'Toggle Draft Mode', off: true, on: true },
        d('focus', 'Focus Data Frame'), b('swap', 'Change Layout'), b('pages', 'Data Driven Pages'),
      ],
    },
    {
      name: 'Advanced Editing',
      items: [
        d('edge', 'Edge'), d('cut2', 'Split'), sep, d('curveX', 'Curve'), sep, d('bigX', 'Delete'), d('pair', 'Pair'), d('ext', 'Extend'), sep,
        d('scurve', 'Smooth'), sep, d('fillet', 'Fillet'), sep, d('nt', 'NT'), d('nm', 'NM'), sep, d('ht', 'H/T'),
      ],
    },
  ],
  [
    { name: 'Geostatistical Analyst', items: [menu('Geostatistical Analyst', 171), b('wizard', 'Wizard')] },
    {
      name: 'Effects',
      items: [
        { kind: 'combo', look: 'sunken', width: 177, label: 'Layer', off: true },
        d('contrast', 'Contrast'), d('sun', 'Brightness'), d('layerPic', 'Transparency'), d('diamond', 'Swipe'), sep,
        d('cabinet', 'Flicker'), sep, d('layerClock', 'Flicker Rate'), { kind: 'spin', label: 'Rate' },
      ],
    },
    {
      name: 'Network Analyst',
      items: [
        menu('Network Analyst', 134), sep, b('naWin', 'Network Analyst Window'), sep,
        d('naAdd', 'Create Location'), d('naSel', 'Select Location'), d('naGrid', 'Solve'), d('naTurn', 'Directions'), sep,
        { kind: 'combo', look: 'grey', width: 179, label: 'Network Dataset', off: true }, d('gridInfo', 'Identify'), d('gridTool', 'Build'),
      ],
    },
    {
      name: 'Axial',
      items: [
        text('AxialGenG', 81), sep, text('AxialGenL', 80), sep, text('MedialAxesGen', 122), sep,
        text('IsovistExplorer', 115), sep, text('BucketExplorer', 118),
      ],
    },
  ],
]

const menus = [
  { label: 'File', width: 41 }, { label: 'Edit', width: 44 }, { label: 'View', width: 51 },
  { label: 'Bookmarks', width: 96 }, { label: 'Insert', width: 57 }, { label: 'Selection', width: 84 },
  { label: 'Geoprocessing', width: 126 }, { label: 'Customize', width: 92 }, { label: 'Windows', width: 83 },
  { label: 'Help', width: 51 },
]

const toolboxes = [
  '3D Analyst Tools', 'Analysis Tools', 'Cartography Tools', 'Conversion Tools', 'Data Interoperability Tools',
  'Data Management Tools', 'Editing Tools', 'ENVI Tools', 'Geocoding Tools', 'Geostatistical Analyst Tools',
  'Linear Referencing Tools', 'Multidimension Tools', 'Network Analyst Tools', 'Parcel Fabric Tools', 'Schematics Tools',
  'sDNA Arc Tools', 'Server Tools', 'Spatial Analyst Tools', 'Spatial Design Network Analysis', 'Spatial Statistics Tools',
  'Tracking Analyst Tools',
]

const tabGroups = [
  [{ icon: 'hammer', label: 'Results', height: 84 }, { icon: 'winBox', label: 'ArcToolbox', height: 108 }],
  [{ icon: 'winCat', label: 'Catalog', height: 84 }, { icon: 'winSearch', label: 'Search', height: 76 }],
  [{ icon: 'tabCreate', label: 'Create Features', height: 149 }],
]

const rate = ref('500')
</script>

<template>
  <div class="window">
    <header class="title">
      <svg class="logo" viewBox="0 0 20 20">
        <circle cx="9.500" cy="9.500" r="9.500" fill="#1d4c72" />
        <path d="M2 5c3-5 9-5 13-1l2 6-3 6-7 1C2 15 0 10 2 5z" fill="#2f7d92" />
        <path d="M3 6c2-3 5-3 6-1l-4 7c-2-1-3-4-2-6z" fill="#5ea35a" />
        <circle cx="10" cy="8.500" r="4.500" fill="#a9dceb" stroke="#e8f3f7" />
        <path d="M13.500 12.500l5 6" stroke="#c9b48a" stroke-width="2.500" />
      </svg>
      <h1>无标题 - ArcMap</h1>
      <button class="wc" aria-label="Minimize"><svg viewBox="0 0 12 12"><path d="M0 6.500h12" stroke="#000" /></svg></button>
      <button class="wc" aria-label="Restore">
        <svg viewBox="0 0 12 12"><path d="M.5 2.500h9v9h-9zM2.500 2.500v-2h9v9h-2" fill="none" stroke="#000" /></svg>
      </button>
      <button class="wc" aria-label="Close"><svg viewBox="0 0 12 12"><path d="M0 0l12 12M12 0L0 12" stroke="#000" /></svg></button>
    </header>

    <div class="bars">
      <nav class="menubar">
        <button v-for="m in menus" :key="m.label" :style="{ width: m.width + 'px' }">{{ m.label }}</button>
      </nav>
      <div v-for="(row, r) in rows" :key="r" class="row">
        <div v-for="bar in row" :key="bar.name" class="toolbar" :class="{ apart: bar.apart }" role="toolbar" :aria-label="bar.name">
          <span class="grip"></span>
          <template v-for="(it, i) in bar.items" :key="i">
            <span v-if="it.kind === 'sep'" class="sep"></span>
            <button v-else-if="it.kind === 'btn'" class="btn" :class="{ off: it.off, on: it.on }" :aria-label="it.label" :disabled="it.off">
              <svg class="icon" viewBox="0 0 16 16" v-html="icons[it.icon!]"></svg>
            </button>
            <button v-else-if="it.kind === 'split'" class="btn split" :class="{ off: it.off }" :aria-label="it.label" :disabled="it.off">
              <svg class="icon" viewBox="0 0 16 16" v-html="icons[it.icon!]"></svg>
              <svg class="caret" viewBox="0 0 5 3"><path d="M0 0h5L2.500 3z" fill="currentColor" /></svg>
            </button>
            <button v-else-if="it.kind === 'colour'" class="btn colour" :aria-label="it.label">
              <span class="ink">
                <svg class="small" viewBox="0 0 16 16" v-html="icons[it.icon!]"></svg>
                <i :style="{ background: it.swatch }"></i>
              </span>
              <svg class="caret" viewBox="0 0 5 3"><path d="M0 0h5L2.500 3z" fill="currentColor" /></svg>
            </button>
            <button v-else-if="it.kind === 'menu'" class="word" :style="{ width: it.width + 'px' }">
              {{ it.label }}<svg class="caret" viewBox="0 0 5 3"><path d="M0 0h5L2.500 3z" fill="currentColor" /></svg>
            </button>
            <button v-else-if="it.kind === 'text'" class="word off" disabled :style="{ width: it.width + 'px' }">{{ it.label }}</button>
            <span v-else-if="it.kind === 'combo'" class="combo" :class="it.look" :style="{ width: it.width + 'px' }">
              <svg v-if="it.label === '宋体'" class="icon" viewBox="0 0 16 16" v-html="icons.truetype"></svg>
              <select :aria-label="it.label" :disabled="it.off"><option>{{ it.off ? '' : it.label }}</option></select>
              <span class="drop">
                <svg v-if="it.look === 'sunken'" class="tri" viewBox="0 0 7 4"><path d="M0 0h7L3.500 4z" fill="currentColor" /></svg>
                <svg v-else class="chevron" viewBox="0 0 10 6"><path d="M.5.5L5 5 9.500.5" fill="none" stroke="currentColor" /></svg>
              </span>
            </span>
            <span v-else class="spin">
              <input v-model="rate" type="text" :aria-label="it.label" />
              <span>
                <button aria-label="Increase"><svg viewBox="0 0 6 4"><path d="M0 4h6L3 0z" /></svg></button>
                <button aria-label="Decrease"><svg viewBox="0 0 6 4"><path d="M0 0h6L3 4z" /></svg></button>
              </span>
            </span>
          </template>
          <button class="more" aria-label="Toolbar Options">
            <svg viewBox="0 0 7 6"><path d="M1 .5h5M1 3h5L3.500 5.500z" fill="#000" stroke="#000" stroke-width=".8" /></svg>
          </button>
        </div>
      </div>
    </div>

    <main>
      <section class="panel toc">
        <header>
          <h2>Table Of Contents</h2>
          <button aria-label="Auto Hide"><svg viewBox="0 0 9 9"><path d="M2.500 5V.5h4V5M5.500.5V5M1 5.500h7M4.500 6v3" fill="none" stroke="#000" /></svg></button>
          <button aria-label="Close"><svg viewBox="0 0 9 9"><path d="M1 1l7 7M8 1L1 8" stroke="#000" stroke-width="1.600" /></svg></button>
        </header>
        <div class="toctools">
          <button class="btn on" aria-label="List By Drawing Order"><svg class="icon" viewBox="0 0 16 16" v-html="icons.tocDraw"></svg></button>
          <button class="btn" aria-label="List By Source"><svg class="icon" viewBox="0 0 16 16" v-html="icons.tocSource"></svg></button>
          <button class="btn" aria-label="List By Visibility"><svg class="icon" viewBox="0 0 16 16" v-html="icons.tocVis"></svg></button>
          <button class="btn" aria-label="List By Selection"><svg class="icon" viewBox="0 0 16 16" v-html="icons.tocSel"></svg></button>
          <span class="sep"></span>
          <button class="btn" aria-label="Options"><svg class="icon" viewBox="0 0 16 16" v-html="icons.tocOpt"></svg></button>
        </div>
        <ul class="list">
          <li class="layers"><svg class="icon" viewBox="0 0 16 16" v-html="icons.layers"></svg><b>Layers</b></li>
        </ul>
      </section>

      <section class="map">
        <div class="canvas"></div>
        <div class="viewbar">
          <button class="view on" aria-label="Data View"><svg viewBox="0 0 16 16" v-html="icons.mapView"></svg></button>
          <button class="view" aria-label="Layout View"><svg viewBox="0 0 16 16" v-html="icons.layoutView"></svg></button>
          <span class="bar"></span>
          <button class="view" aria-label="Refresh"><svg viewBox="0 0 16 16" v-html="icons.refresh"></svg></button>
          <button class="view" aria-label="Pause Drawing"><svg viewBox="0 0 16 16" v-html="icons.pause"></svg></button>
          <button class="left" aria-label="Scroll Left"><svg viewBox="0 0 6 8"><path d="M5.500 0L1.500 4l4 4" fill="none" stroke="#555" stroke-width="2" /></svg></button>
          <span class="thumb"></span>
        </div>
      </section>

      <section class="panel toolbox">
        <header>
          <h2>ArcToolbox</h2>
          <button aria-label="Auto Hide"><svg viewBox="0 0 9 9"><path d="M4 2.500h4.500v4H4M4 5.500h4.500M3.500 1v7M0 4.500h3" fill="none" stroke="#000" /></svg></button>
          <button aria-label="Close"><svg viewBox="0 0 9 9"><path d="M1 1l7 7M8 1L1 8" stroke="#000" stroke-width="1.600" /></svg></button>
        </header>
        <ul class="list">
          <li class="root"><svg class="icon" viewBox="0 0 16 16" v-html="icons.boxRoot"></svg><span>ArcToolbox</span></li>
          <li v-for="t in toolboxes" :key="t">
            <button class="plus" :aria-label="'Expand ' + t">
              <svg viewBox="0 0 9 9"><path d="M.5.5h8v8h-8z" fill="#fff" stroke="#919191" /><path d="M2 4.500h5M4.500 2v5" stroke="#3353a8" /></svg>
            </button>
            <svg class="icon" viewBox="0 0 16 16" v-html="t.startsWith('Spatial Design') ? icons.boxBlue : icons.box"></svg>
            <span>{{ t }}</span>
          </li>
        </ul>
      </section>

      <aside class="rail">
        <div v-for="(g, i) in tabGroups" :key="i" class="tabs">
          <button v-for="t in g" :key="t.label" :style="{ height: t.height + 'px' }">
            <svg class="icon" viewBox="0 0 16 16" v-html="icons[t.icon]"></svg>
            <span>{{ t.label }}</span>
          </button>
        </div>
      </aside>
    </main>

    <footer class="status"><span class="cell"></span><span class="coords">1349.469&nbsp; 800.472 Unknown Units</span></footer>
  </div>
</template>

<style>
body {
  margin: 0;
}
</style>

<style scoped>
* {
  box-sizing: border-box;
}
.window {
  display: flex;
  flex-direction: column;
  min-height: 100vh;
  font-family: 'Open Sans', 'Noto Sans CJK SC', sans-serif;
  font-size: 16px;
  color: #000;
  background: #f0f0f0;
  overflow: hidden;
}
button {
  display: flex;
  align-items: center;
  justify-content: center;
  flex: none;
  margin: 0;
  padding: 0;
  border: 0;
  background: none;
  font: inherit;
  color: inherit;
  white-space: nowrap;
}
h1,
h2,
ul {
  margin: 0;
  padding: 0;
  font-weight: 400;
  list-style: none;
}
svg {
  display: block;
  flex: none;
}
.icon {
  width: 16px;
  height: 16px;
}
.title {
  display: flex;
  align-items: center;
  height: 29px;
  padding: 0 3px 1px 2px;
  background: #fff;
}
.logo {
  width: 20px;
  height: 20px;
}
h1 {
  flex: 1;
  padding-left: 5px;
  font-size: 16px;
  line-height: 28px;
}
.wc {
  width: 58px;
  height: 28px;
}
.wc svg {
  width: 12px;
  height: 12px;
}
.bars {
  background: linear-gradient(90deg, #f0f0f0, #fafafa 80%);
}
.menubar {
  display: flex;
  height: 30px;
  padding-left: 4px;
}
.row {
  display: flex;
  gap: 4px;
  height: 30px;
  padding: 0 0 1px 2px;
}
.toolbar {
  display: flex;
  align-items: center;
  flex: none;
  background: linear-gradient(#fbfbfb, #f0f0f0);
  border-radius: 3px 0 0 3px;
}
.apart {
  margin-left: 16px;
}
.grip {
  width: 8px;
  height: 20px;
  background: repeating-linear-gradient(#b8b8b8 0 2px, transparent 2px 4px) 3px 0 / 2px 20px no-repeat;
}
.sep {
  width: 6px;
  height: 18px;
  background: linear-gradient(#b4b4b4, #b4b4b4) 2px 0 / 1px 100% no-repeat;
}
.btn {
  width: 22px;
  height: 22px;
}
.off {
  color: #b2b2b2;
}
.on {
  border: 1px solid #0078d7;
  background: #dcebf8;
}
.on.off {
  border-color: #b9c4ce;
  background: #dfe8f0;
}
.split {
  width: 33px;
  gap: 5px;
}
.caret {
  width: 5px;
  height: 3px;
}
.colour {
  width: 38px;
  gap: 7px;
}
.ink {
  display: flex;
  flex-direction: column;
  align-items: center;
}
.small {
  width: 14px;
  height: 14px;
}
.ink i {
  width: 18px;
  height: 3px;
}
.word {
  height: 26px;
  gap: 4px;
}
.combo {
  position: relative;
  display: flex;
  align-items: center;
  flex: none;
  height: 22px;
  border: 1px solid #c8c8c8;
  background: #fff;
}
.combo .icon {
  margin-left: 2px;
}
select {
  flex: 1;
  min-width: 0;
  height: 100%;
  margin: 0;
  padding: 0 2px;
  border: 0;
  border-radius: 0;
  outline: 0;
  appearance: none;
  background: none;
  font: inherit;
  font-size: 14px;
  color: #000;
  opacity: 1;
}
.glyph select {
  font-size: 15px;
}
.drop {
  position: absolute;
  top: 0;
  right: 0;
  display: flex;
  align-items: center;
  justify-content: center;
  width: 20px;
  height: 100%;
  color: #444;
  pointer-events: none;
}
.chevron {
  width: 10px;
  height: 6px;
}
.tri {
  width: 7px;
  height: 4px;
}
.dark {
  border-color: #555;
}
.flat .drop,
.grey .drop,
.sunken .drop {
  color: #a0a0a0;
}
.inset select {
  height: 18px;
  margin: 0 25px 0 2px;
  background: #f0f0f0;
}
.picked select {
  flex: none;
  width: 33px;
  height: 16px;
  margin-left: 2px;
  padding: 0;
  background: #0078d7;
  color: #7d6a63;
  font-size: 12px;
  line-height: 16px;
}
.sunken {
  height: 19px;
  margin-right: 2px;
  border: 2px solid #a0a0a0;
  border-color: #777 #ccc #ccc #777;
  background: #f0f0f0;
}
.sunken .drop {
  width: 16px;
  border: 1px solid #999;
  border-color: #fff #999 #999 #fff;
}
.grey {
  height: 20px;
  border-color: #ccc;
  background: #ccc;
}
.spin {
  display: flex;
  flex: none;
  width: 59px;
  height: 20px;
  border: 1px solid #777;
  background: #f0f0f0;
}
.spin input {
  width: 37px;
  padding: 0 2px;
  border: 0;
  background: #fff;
  font: inherit;
  font-size: 14px;
}
.spin > span {
  display: flex;
  flex-direction: column;
  flex: 1;
}
.spin button {
  flex: 1;
  border: 1px solid #aaa;
  border-color: #fff #aaa #aaa #fff;
}
.spin svg {
  width: 6px;
  height: 4px;
}
.more {
  align-items: flex-end;
  width: 11px;
  height: 100%;
  margin-left: 2px;
  padding-bottom: 3px;
  background: linear-gradient(#f2f2f2, #a0a0a0);
}
.more svg {
  width: 7px;
  height: 6px;
}
main {
  display: flex;
  flex: 1;
}
.panel {
  display: flex;
  flex-direction: column;
  flex: none;
}
.panel header {
  display: flex;
  align-items: center;
  gap: 7px;
  height: 25px;
  padding: 0 4px;
}
.panel header svg {
  width: 9px;
  height: 9px;
}
h2 {
  flex: 1;
  font-size: 16px;
  line-height: 25px;
}
.toc {
  width: 415px;
  padding-bottom: 1px;
}
.toc header {
  background: linear-gradient(90deg, #bfcddb, #d7e4f2);
}
.toctools {
  display: flex;
  align-items: center;
  height: 26px;
  padding-left: 4px;
  background: linear-gradient(#fafafa, #f0f0f0);
}
.toctools .sep {
  height: 14px;
}
.list {
  flex: 1;
  border: 1px solid #828790;
  background: #fff;
  font-size: 13px;
}
li {
  display: flex;
  align-items: center;
  height: 20px;
  padding-left: 8px;
}
.layers {
  padding-left: 23px;
  gap: 3px;
}
.layers b {
  padding: 0 2px;
  line-height: 18px;
  color: #fff;
  background: #0078d7;
}
.map {
  display: flex;
  flex-direction: column;
  flex: 1;
  margin: 0 4px 1px 5px;
}
.canvas {
  flex: 1;
  border: solid #808080;
  border-width: 2px 0 0 2px;
  border-color: #696969 #fff #e3e3e3 #808080;
  background: #fff;
}
.viewbar {
  display: flex;
  height: 22px;
  border: solid #e0e0e0;
  border-width: 2px 0 2px 2px;
  border-color: #e6e6e6 #fff #fff #808080;
}
.view {
  width: 15px;
  height: 12px;
}
.view.on {
  border: 1px solid #90c8f6;
  background: #c4e1f8;
}
.view svg {
  width: 12px;
  height: 12px;
}
.bar {
  width: 1px;
  height: 10px;
  margin: 0 5px 0 2px;
  background: #888;
}
.left {
  width: 24px;
  padding-left: 6px;
}
.left svg {
  width: 6px;
  height: 8px;
}
.thumb {
  flex: 1;
  background: #cdcdcd;
}
.toolbox {
  width: 279px;
}
.toolbox header {
  background: linear-gradient(90deg, #99b4d1, #b9d1ea);
}
.toolbox li .icon {
  margin-right: 5px;
}
.toolbox .root {
  padding-left: 5px;
}
.toolbox .root .icon {
  margin-right: 2px;
}
.root span {
  padding: 0 2px;
  line-height: 20px;
  color: #fff;
  background: #0078d7;
}
.plus {
  width: 9px;
  height: 9px;
  margin-right: 6px;
}
.plus svg {
  width: 9px;
  height: 9px;
}
.rail {
  flex: none;
  width: 25px;
  padding: 2px 0 0 2px;
  background: #fafafa;
}
.tabs {
  margin-bottom: 14px;
}
.tabs button {
  flex-direction: column;
  align-items: flex-start;
  justify-content: flex-start;
  gap: 3px;
  width: 23px;
  padding: 4px 0 0 2px;
  border: 1px solid #a8a8a8;
  border-right: 0;
  border-radius: 4px 0 0 4px;
  background: #f0f0f0;
}
.tabs span {
  writing-mode: vertical-rl;
  font-family: 'Liberation Mono', monospace;
  font-size: 13px;
  line-height: 16px;
  color: #555;
}
.status {
  display: flex;
  align-items: center;
  justify-content: flex-end;
  height: 24px;
}
.cell {
  width: 19px;
  height: 21px;
  border: 1px solid #f5f5f5;
}
.coords {
  width: 283px;
  line-height: 24px;
  white-space: nowrap;
}
</style>
